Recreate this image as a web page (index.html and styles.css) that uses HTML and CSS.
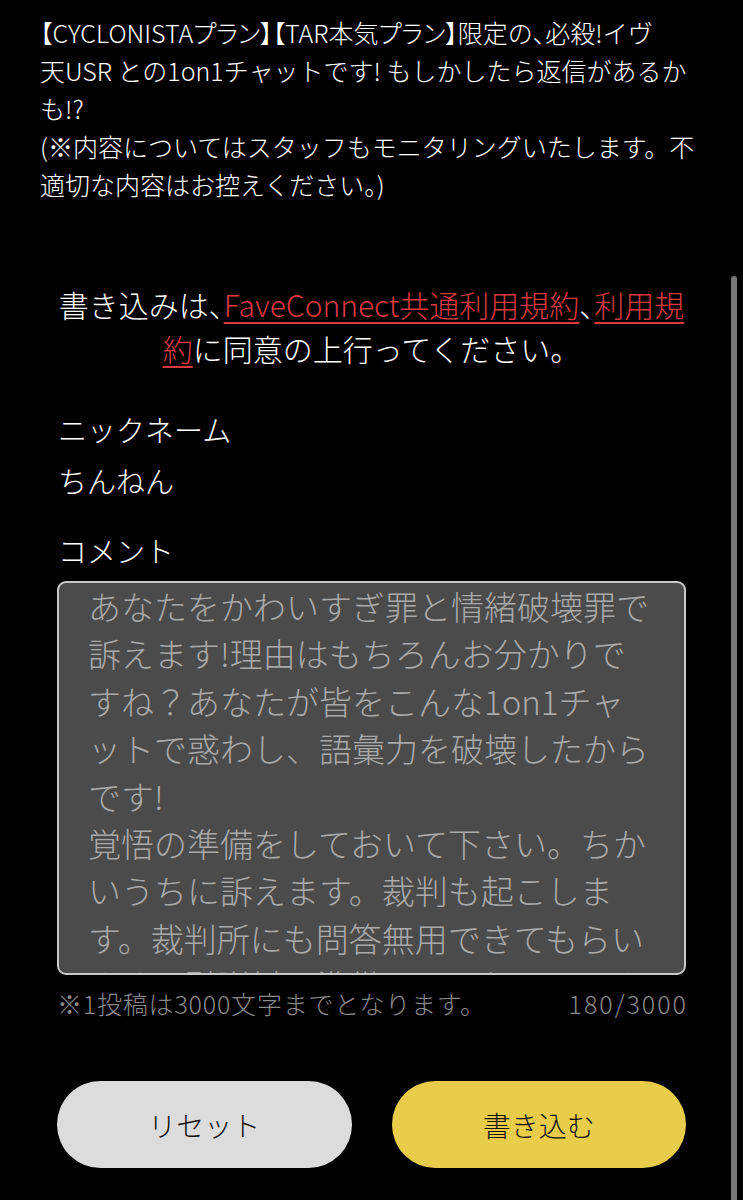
FILE: index.html
```html
<!DOCTYPE html>
<html lang="ja">
<head>
<meta charset="utf-8">
<title>1on1チャット</title>
<link rel="stylesheet" href="styles.css">
</head>
<body>
<main class="page">
  <p class="intro"><span class="plans">【CYCLONISTAプラン】【TAR本気プラン】</span>限定の<span class="plans">、</span>必殺!イヴ<br>天USR との1on1チャットです! もしかしたら返信があるか<br>も!?<br>(※内容についてはスタッフもモニタリングいたします。不<br>適切な内容はお控えください。)</p>

  <p class="terms">書き込みは<span class="plans">、</span><a href="#" class="link">FaveConnect共通利用規約</a><span class="plans">、</span><a href="#" class="link">利用規約</a>に同意の上行ってください。</p>

  <form class="form">
    <div class="label">ニックネーム</div>
    <div class="nickname">ちんねん</div>
    <div class="label comment-label">コメント</div>
    <textarea class="comment" readonly>あなたをかわいすぎ罪と情緒破壊罪で訴えます!理由はもちろんお分かりですね？あなたが皆をこんな1on1チャットで惑わし、語彙力を破壊したからです!
覚悟の準備をしておいて下さい。ちかいうちに訴えます。裁判も起こします。裁判所にも問答無用できてもらいます。慰謝料の準備もしておいて下さい!</textarea>
    <div class="note">
      <span>※1投稿は3000文字までとなります。</span>
      <span class="count">180/3000</span>
    </div>
    <div class="buttons">
      <button type="reset" class="btn btn-reset">リセット</button>
      <button type="button" class="btn btn-submit">書き込む</button>
    </div>
  </form>
</main>
<div class="scrollbar"></div>
</body>
</html>
```

FILE: styles.css
```css
html, body {
  margin: 0;
  padding: 0;
  background: #000;
}
body {
  font-family: "Noto Sans CJK JP", "Noto Sans", sans-serif;
  font-weight: 300;
  color: #fff;
  height: 1200px;
  overflow: hidden;
}
.page {
  display: flex;
  flex-direction: column;
}
.intro {
  margin: 0;
  padding: 13px 40px 0;
  font-size: 25px;
  line-height: 38px;
  white-space: nowrap;
}
.plans {
  font-feature-settings: "palt";
}
.terms {
  margin: 79px 0 0;
  padding: 0 50px;
  font-size: 30px;
  line-height: 44px;
  text-align: center;
}
.link {
  color: #d9393f;
  text-decoration: underline;
  text-underline-offset: 5px;
  text-decoration-thickness: 2px;
}
.form {
  margin: 38px 0 0;
  padding: 0 57px;
  display: flex;
  flex-direction: column;
}
.label, .nickname {
  font-size: 29px;
  line-height: 42px;
  padding-left: 1px;
}
.nickname {
  margin-top: 9px;
}
.comment-label {
  margin-top: 28px;
}
.comment {
  margin: 10px 0 0;
  box-sizing: border-box;
  height: 394px;
  width: 100%;
  padding: 0 31px 0 29px;
  background: #4b4b4b;
  border: 2px solid #c8c8c8;
  border-radius: 9px;
  color: #a9a9a9;
  font-family: "Noto Sans CJK JP", sans-serif;
  font-weight: 300;
  font-size: 33px;
  line-height: 47.4px;
  resize: none;
  overflow: hidden;
  outline: none;
}
.note {
  margin-top: 13px;
  display: flex;
  justify-content: space-between;
  font-size: 25px;
  line-height: 30px;
  letter-spacing: 0.8px;
  color: #8a8a8a;
}
.count {
  letter-spacing: 2px;
  margin-right: -2px;
}
.buttons {
  margin-top: 63px;
  display: flex;
  gap: 40px;
}
.btn {
  flex: 1;
  height: 87px;
  border: none;
  border-radius: 44px;
  font-family: "Noto Sans CJK JP", sans-serif;
  font-weight: 300;
  font-size: 28px;
  color: #111;
}
.btn-reset {
  background: #dcdcdc;
}
.btn-submit {
  background: #e8cc4a;
}
.scrollbar {
  position: fixed;
  right: 6px;
  top: 276px;
  bottom: 0;
  width: 6px;
  background: #767676;
  border-radius: 3px 3px 0 0;
}
```
